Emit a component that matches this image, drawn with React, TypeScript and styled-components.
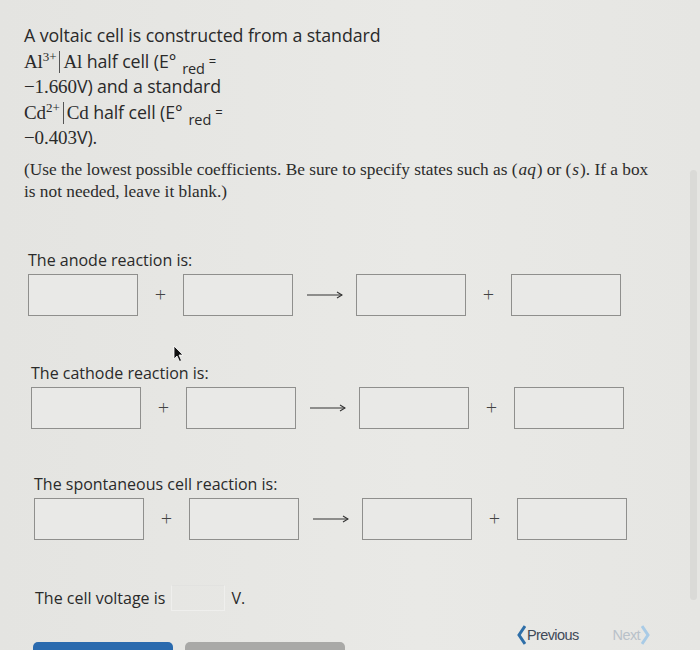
import React from 'react';
import styled, { createGlobalStyle } from 'styled-components';

const GlobalStyle = createGlobalStyle`
  html, body {
    margin: 0;
    padding: 0;
    background: #e7e7e4;
  }
  body {
    font-family: 'Open Sans', 'Liberation Sans', sans-serif;
    color: #2a2a2a;
  }
`;

const Page = styled.div`
  position: relative;
  width: 700px;
  height: 650px;
  overflow: hidden;
  box-sizing: border-box;
  padding: 23px 0 0 24px;
  background: linear-gradient(90deg, #e4e4e1 0%, #e9e9e6 60%, #e6e6e3 100%);
`;

const Intro = styled.div`
  font-size: 17.8px;
  letter-spacing: -0.1px;
`;

const Line = styled.div`
  height: 25.5px;
  line-height: 25.5px;
  white-space: nowrap;
`;

const Chem = styled.span`
  font-family: 'Liberation Serif', 'DejaVu Serif', serif;
  font-size: 19px;
  line-height: 1;
`;

const Sup = styled.sup`
  font-size: 13px;
  vertical-align: 7px;
  line-height: 0;
`;

const Bar = styled.span`
  display: inline-block;
  width: 1px;
  height: 22px;
  background: #555;
  margin: 0 3px 0 3px;
  vertical-align: -5px;
`;

const Sub = styled.span`
  font-size: 14.5px;
  position: relative;
  top: 6px;
  margin-left: 6px;
`;

const Eq = styled.span`
  font-size: 13px;
  position: relative;
  top: -2px;
  margin-left: 4px;
`;

const Note = styled.p`
  margin: 8px 0 0;
  font-family: 'Liberation Serif', 'Times New Roman', serif;
  font-size: 17.3px;
  line-height: 22px;
  width: 630px;
  color: #2c2c2c;
`;

const State = styled.i`
  padding: 0 1px;
`;

const Section = styled.div<{ $indent: number; $top: number }>`
  margin: ${(p) => p.$top}px 0 0 ${(p) => p.$indent}px;
`;

const Label = styled.div`
  font-size: 16px;
  line-height: 22px;
  margin-bottom: 3px;
`;

const Row = styled.div`
  display: flex;
  align-items: center;
`;

const Box = styled.div`
  width: 108px;
  height: 40px;
  border: 1px solid #8f8f8d;
  background: #e9e9e7;
`;

const Plus = styled.span`
  width: 45px;
  text-align: center;
  font-size: 20px;
  font-weight: 300;
  color: #444;
`;

const ArrowWrap = styled.span`
  width: 63px;
  display: flex;
  justify-content: center;
`;

const VoltageRow = styled.div`
  display: flex;
  align-items: center;
  margin: 45px 0 0 11px;
  font-size: 16px;
  line-height: 24px;
`;

const BlankInput = styled.span`
  display: inline-block;
  width: 52px;
  height: 24px;
  margin: 0 6px 0 6px;
  border: 1px solid #efefed;
  border-top-color: #e2e2e0;
`;

const Footer = styled.div`
  display: flex;
  justify-content: flex-end;
  gap: 34px;
  margin: 14px 50px 0 0;
  font-family: 'Liberation Sans', Arial, sans-serif;
  font-size: 14.5px;
  letter-spacing: -0.6px;
`;

const NavLink = styled.span<{ $muted?: boolean }>`
  display: flex;
  align-items: center;
  gap: 1px;
  color: ${(p) => (p.$muted ? '#b9c1c9' : '#3f4a58')};
`;

const Tabs = styled.div`
  display: flex;
  gap: 12px;
  position: absolute;
  left: 33px;
  bottom: 0;
`;

const Tab = styled.div<{ $color: string; $w: number }>`
  width: ${(p) => p.$w}px;
  height: 8px;
  border-radius: 5px 5px 0 0;
  background: ${(p) => p.$color};
`;

const Scrollbar = styled.div`
  position: absolute;
  right: 3px;
  top: 170px;
  width: 7px;
  height: 430px;
  border-radius: 4px;
  background: #dadad7;
`;

const Pointer = styled.svg`
  position: absolute;
  left: 173px;
  top: 345px;
`;

const Arrow = () => (
  <svg width="36" height="10" viewBox="0 0 36 10">
    <line x1="0" y1="5" x2="35" y2="5" stroke="#333" strokeWidth="1.1" />
    <path d="M30 2 L35 5 L30 8" fill="none" stroke="#333" strokeWidth="1.1" />
  </svg>
);

const Chevron = ({ dir, color }: { dir: 'left' | 'right'; color: string }) => (
  <svg width="9" height="20" viewBox="0 0 9 20">
    {dir === 'left' ? (
      <path d="M8 1 L2 10 L8 19" fill="none" stroke={color} strokeWidth="3" />
    ) : (
      <path d="M1 1 L7 10 L1 19" fill="none" stroke={color} strokeWidth="3" />
    )}
  </svg>
);

function Reaction ({ label, indent, top }: { label: string; indent: number; top: number }) {
  return (
    <Section $indent={indent} $top={top}>
      <Label>{label}</Label>
      <Row>
        <Box />
        <Plus>+</Plus>
        <Box />
        <ArrowWrap><Arrow /></ArrowWrap>
        <Box />
        <Plus>+</Plus>
        <Box />
      </Row>
    </Section>
  );
}

export default function App () {
  return (
    <Page>
      <GlobalStyle />
      <Intro>
        <Line>A voltaic cell is constructed from a standard</Line>
        <Line>
          <Chem>Al<Sup>3+</Sup></Chem><Bar /><Chem>Al</Chem> half cell (E°<Sub>red</Sub><Eq>=</Eq>
        </Line>
        <Line><Chem>−1.660</Chem>V) and a standard</Line>
        <Line>
          <Chem>Cd<Sup>2+</Sup></Chem><Bar /><Chem>Cd</Chem> half cell (E°<Sub>red</Sub><Eq>=</Eq>
        </Line>
        <Line><Chem>−0.403</Chem>V).</Line>
      </Intro>
      <Note>
        (Use the lowest possible coefficients. Be sure to specify states such as (<State>aq</State>) or (<State>s</State>). If a box
        is not needed, leave it blank.)
      </Note>
      <Reaction label="The anode reaction is:" indent={4} top={46} />
      <Reaction label="The cathode reaction is:" indent={7} top={46} />
      <Reaction label="The spontaneous cell reaction is:" indent={10} top={44} />
      <VoltageRow>
        The cell voltage is<BlankInput />V.
      </VoltageRow>
      <Footer>
        <NavLink><Chevron dir="left" color="#2f6fa8" />Previous</NavLink>
        <NavLink $muted>Next<Chevron dir="right" color="#a9cbe6" /></NavLink>
      </Footer>
      <Tabs>
        <Tab $color="#2a6aae" $w={140} />
        <Tab $color="#a9a9a7" $w={160} />
      </Tabs>
      <Scrollbar />
      <Pointer width="12" height="18" viewBox="0 0 12 18">
        <path d="M1 1 L1 14 L4 11 L6.5 16.5 L8.5 15.5 L6 10 L10 10 Z" fill="#111" stroke="#fff" strokeWidth="0.8" />
      </Pointer>
    </Page>
  );
}
